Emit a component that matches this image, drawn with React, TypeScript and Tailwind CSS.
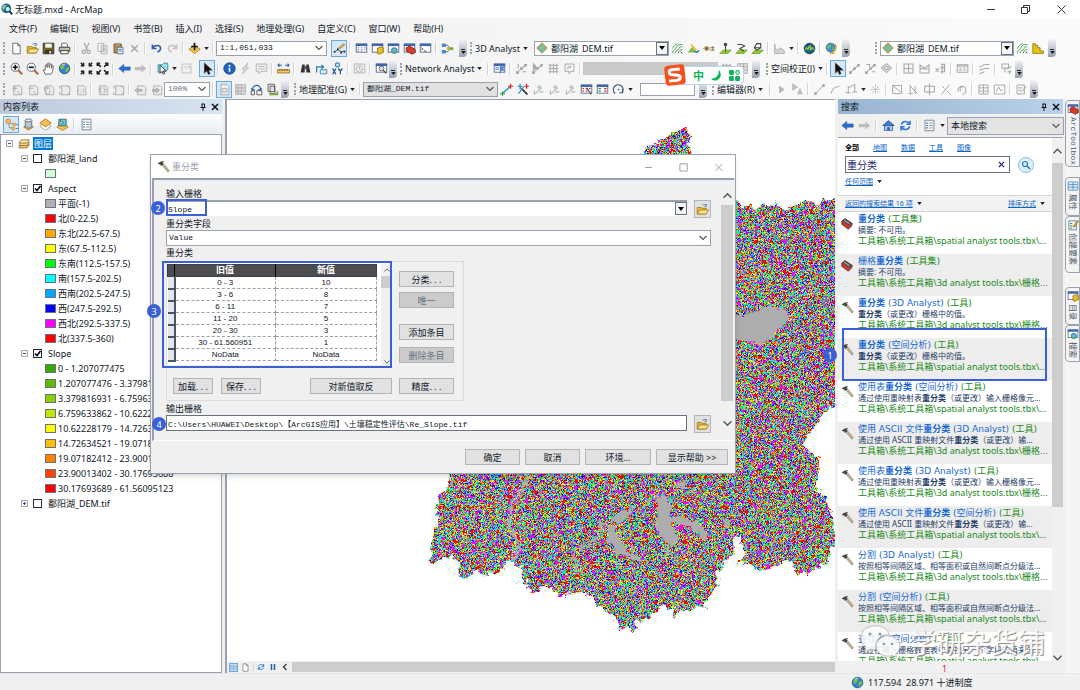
import { Fragment, type ReactNode } from 'react';

/* ---------- icons ---------- */

const G = '#a8a8a8';

const page = (c: string) => <path d="M3.5 1.5h6l3 3v10h-9zM9.5 1.5v3h3" fill="#fff" stroke={c} />;
const win = (extra: ReactNode) => (
  <>
    <rect x="1.5" y="2.5" width="13" height="10" fill="#fff" stroke="#4a5d80" />
    <rect x="1" y="2" width="14" height="3" fill="#3f68ab" />
    {extra}
  </>
);
const greyPage = (extra: ReactNode) => (
  <g fill="none" stroke={G}>
    <path d="M4.500 3.500h8l2 2v9h-10z" fill="#ececec" />
    {extra}
  </g>
);
const nodes = (extra: ReactNode) => (
  <g fill="none" stroke={G} strokeWidth="1.300">
    <path d="M3 13 8 8l5-4" />
    <path d="M2 12h2v2H2zM7 7h2v2H7zM12 3h2v2h-2z" fill={G} />
    {extra}
  </g>
);
const globe = (
  <>
    <circle cx="8" cy="8" r="6.500" fill="#2f7fd6" stroke="#28507c" />
    <path d="M4 4c3-2 5 0 4 2s-3 2-3 4c-2-1-3-4-1-6zM10 7c2-1 4 0 4 1s-2 4-4 5c-1-2-1-4 0-6z" fill="#7cc142" />
    <path d="M5 3.500c2-1 3-1 4-.5" stroke="#e4f5ff" fill="none" />
  </>
);
const surface = (extra: ReactNode) => (
  <>
    <path d="M1 14 5 10h10l-4 4z" fill="#8bcf2f" stroke="#4f7a1b" strokeWidth=".7" />
    <g fill="none" stroke="#444" strokeWidth="1.300">{extra}</g>
  </>
);

const icons: Record<string, ReactNode> = {
  new: page('#555'),
  open: (
    <>
      <path d="M1.500 5.500h5l1 1h5v7h-11z" fill="#e9b93c" stroke="#9b7614" />
      <path d="m1.500 13.500 3-5h11l-3 5z" fill="#ffe08a" stroke="#9b7614" />
      <path d="M8 3c2-2 4-1 5 0V1.500M13 4h-2.500" stroke="#2c67a8" fill="none" />
    </>
  ),
  save: (
    <>
      <path d="M1.500 1.500h13v13h-13z" fill="#6f6425" stroke="#222" />
      <path d="M4 2h8v5H4z" fill="#f3f3f3" />
      <path d="M4 10h8v4H4z" fill="#333" />
      <path d="M9 11h2v3H9z" fill="#eee" />
    </>
  ),
  print: (
    <>
      <path d="M4.500 1.500h6l1 1v4h-7z" fill="#fff" stroke="#555" />
      <path d="M1.500 6.500h13v5h-13z" fill="#bbb" stroke="#333" />
      <path d="M3.500 10.500h9v4h-9z" fill="#f4f4dc" stroke="#333" />
      <path d="M10 8h3" stroke="#e6e03a" />
    </>
  ),
  cut: (
    <g fill="none" stroke={G} strokeWidth="1.500">
      <path d="m5 1 4 9M11 1 7 10" />
      <circle cx="4.500" cy="12" r="2" />
      <circle cx="10.500" cy="12" r="2" />
    </g>
  ),
  copy: (
    <g fill="#f1f1f1" stroke={G}>
      <path d="M2.500 1.500h7v10h-7zM6.500 4.500h7v10h-7zM8 7.500h4M8 9.500h4M8 11.500h4" />
    </g>
  ),
  paste: (
    <>
      <path d="M2.500 2.500h9v11h-9z" fill="#c58a3d" stroke="#6b4a1d" />
      <path d="M5 1h4v3H5z" fill="#999" />
      <path d="M6.500 6.500h7v8h-7z" fill="#e8f1ff" stroke="#41699c" />
      <path d="M8 9h4M8 11h4" stroke="#41699c" />
    </>
  ),
  del: <path d="m4 4 8 8M12 4l-8 8" stroke={G} strokeWidth="2" />,
  undo: <path d="M3 3v5h5M3 8c2-5 10-5 10 0 0 2-2 4-4 4" fill="none" stroke="#2760a8" strokeWidth="2" />,
  redo: <path d="M13 3v5H8M13 8C11 3 3 3 3 8c0 2 2 4 4 4" fill="none" stroke="#c4c4c4" strokeWidth="2" />,
  add: (
    <>
      <path d="m8 4 7 5-7 5-7-5z" fill="#f5c64c" stroke="#a87a10" />
      <path d="M8 1v9M4 5.500h8" stroke="#111" strokeWidth="2" />
    </>
  ),
  edit: (
    <>
      <path d="m2 12 4-3 4 3 5-1" fill="none" stroke="#444" />
      <path d="M1 11h2v2H1zM5 8h2v2H5zM9 12h2v2H9zM13 11h2v2h-2z" fill="#111" />
      <path d="m7 7 6-5 1.500 1.500L9 8z" fill="#f3b53a" stroke="#7a5310" strokeWidth=".7" />
    </>
  ),
  table: win(<path d="M3 7h2M7 7h2M11 7h2M3 9h2M7 9h2M11 9h2M3 11h2M7 11h2" stroke="#5b8ad0" />),
  catalog: win(<path d="M8 7.500 13 6l2 1v6l-5 2-2-1z" fill="#e8bf25" stroke="#8b6b08" />),
  search: win(
    <>
      <circle cx="9" cy="10.500" r="3.500" fill="#5cb7d9" stroke="#2b6288" />
      <path d="m6 12 4 2" stroke="#68ad32" strokeWidth="1.500" />
    </>,
  ),
  toolbox: win(<path d="m4 7 4-2 7 4v4l-4 2-7-4z" fill="#d43d2a" stroke="#7d1a10" />),
  python: win(<path d="m3 7 2 1.500L3 10M6 11h3" fill="none" stroke="#333" />),
  model: (
    <>
      <path d="M4 4h4l3 4M4 12h4l3-4" fill="none" stroke="#555" />
      <path d="M1 2h5v4H1z" fill="#3f83d8" />
      <path d="M1 10h5v4H1z" fill="#3f83d8" />
      <path d="M7 6h3v4H7z" fill="#f1b42c" />
      <ellipse cx="13" cy="8" rx="2.500" ry="2" fill="#65b32e" />
    </>
  ),
  contour: (
    <g fill="none" stroke="#4d9d57" strokeWidth="1.200">
      <path d="M2 14c0-5 3-4 4-7s4-4 8-4M5 14c0-4 4-3 5-6s2-2 4-2M9 14c0-3 2-4 5-5M2 8c1-3 3-5 6-6" />
      <path d="m12 12 2 2" stroke="#333" />
    </g>
  ),
  steep: (
    <>
      <path d="M1 13 6 6l4 5 5 2z" fill="#77c043" />
      <path d="m5 3 6 7" stroke="#f1b42c" strokeWidth="2" />
      <path d="m9 11 3 2 3-3" stroke="#2b66b1" fill="none" strokeWidth="1.500" />
    </>
  ),
  sight: (
    <>
      <path d="M1 8c2-3 5-3 7 0-2 3-5 3-7 0z" fill="#f1dfb3" stroke="#8b6422" />
      <circle cx="4.500" cy="8" r="1.500" fill="#444" />
      <path d="M9 7h5M9 10h5" stroke="#e17e1f" strokeWidth="1.500" />
      <path d="M12 5v6" stroke="#3878c7" />
    </>
  ),
  point3d: surface(
    <>
      <path d="M8 4v8" />
      <circle cx="8" cy="3" r="1.500" fill="#444" />
    </>,
  ),
  line3d: surface(<path d="M3 3h5l4 2-6 3 5 3" />),
  poly3d: surface(<path d="M4 7 7 2h5v5zM4 7l3 3 5-3" />),
  profile: <path d="M2 2v12h12v-3L9 7 6 10 3 8z" fill="#d4d4d4" stroke={G} />,
  scene: (
    <>
      <circle cx="8" cy="8" r="6.500" fill="#155d82" stroke="#0c3a57" />
      <path d="M3 10c1-4 2-4 3 0M6 10c1-6 3-6 4 0M10 9c1-3 2-3 3 1" fill="none" stroke="#8fd14c" strokeWidth="1.500" />
      <path d="M9 4v6" stroke="#f4a52b" strokeWidth="1.500" />
    </>
  ),
  arcglobe: (
    <>
      <circle cx="7" cy="7" r="5.500" fill="#3791e0" stroke="#31629c" />
      <path d="M4 4c3-2 4 0 3 2S4 8 4 10C2 8 2 5 4 4zM9 6l3 1-2 4z" fill="#77c442" />
      <path d="M12 2c3 4 2 9-3 11M6 14h6" stroke="#e3a522" strokeWidth="1.700" fill="none" />
    </>
  ),
  histo: <path d="M1 14V2h3v2h3v3h3v4h4v3z" fill="#e6c11e" stroke="#8f7508" />,
  zoomIn: (
    <>
      <path d="m10 10 5 5" stroke="#b0622c" strokeWidth="2.500" />
      <circle cx="6.500" cy="6.500" r="5" fill="#eef6fb" stroke="#555" />
      <path d="M6.500 3.500v6M3.500 6.500h6" stroke="#111" strokeWidth="2" />
    </>
  ),
  zoomOut: (
    <>
      <path d="m10 10 5 5" stroke="#b0622c" strokeWidth="2.500" />
      <circle cx="6.500" cy="6.500" r="5" fill="#eef6fb" stroke="#555" />
      <path d="M3.500 6.500h6" stroke="#111" strokeWidth="2" />
    </>
  ),
  hand: <path d="M4 15 1.500 9.500 4 10V4l1.500-1 1 4V2L8 1l1 6 1-5 1.500.5V8l1-4L14 5l-1 7-2 3z" fill="#fff" stroke="#555" />,
  globe,
  zin: (
    <path
      d="M1 4.500h3.500V1M15 4.500h-3.500V1M1 11.500h3.500V15M15 11.500h-3.500V15M4.500 4.500 1 1M11.500 4.500 15 1M4.500 11.500 1 15M11.500 11.500 15 15"
      fill="none"
      stroke="#222"
      strokeWidth="1.800"
    />
  ),
  zout: (
    <path
      d="M1.500 5V1.500H5M14.500 5V1.500H11M1.500 11v3.500H5M14.500 11v3.500H11M2 2l4 4M14 2l-4 4M2 14l4-4M14 14l-4-4"
      fill="none"
      stroke="#222"
      strokeWidth="1.800"
    />
  ),
  back: <path d="m1 8 6-5v3h8v4H7v3z" fill="#2b6fd0" stroke="#1a4690" strokeWidth=".6" />,
  fwd: <path d="M15 8 9 3v3H1v4h8v3z" fill="#bdbdbd" />,
  selfeat: (
    <>
      <path d="M2.500 3.500h5l2-2h5v8l-4 3h-8z" fill="#8fe4ea" stroke="#41769a" />
      <path d="M5 4v10l2.500-2.500L9 15l1.500-.7L9 11h3.500z" fill="#fff" stroke="#222" />
    </>
  ),
  clear: <path d="M2.500 2.500h11v11h-11zM5 5l3 3M9 5.500h3v3" fill="#efefef" stroke="#bbb" />,
  pointer: <path d="M4 1v13l3-3 2 4.500 2.300-1L9.500 10H14z" fill="#111" stroke="#555" strokeWidth=".5" />,
  info: (
    <>
      <circle cx="8" cy="8" r="7" fill="#1f63bd" stroke="#123f80" />
      <circle cx="8" cy="4.500" r="1.200" fill="#fff" />
      <path d="M8 7v5" stroke="#fff" strokeWidth="2" />
    </>
  ),
  bolt: <path d="M11 1 4 9h3l-3 6 8-8H8.500z" fill="#ddd" stroke={G} strokeWidth=".8" />,
  popup: <path d="M1.500 2.500h13v9h-7l-3 3v-3h-3zM4 5.500h8M4 8.500h8" fill="#f1f1f1" stroke={G} />,
  measure: (
    <>
      <path d="M1 4h5M1 4l2-2M1 4l2 2M15 4h-5M15 4l-2-2M15 4l-2 2" stroke="#2760a8" strokeWidth="1.300" fill="none" />
      <path d="M.5 9.500h15v4H.5z" fill="#f5c96a" stroke="#8f6a1c" />
      <path d="M3.500 9v2M6.500 9v2M9.500 9v2M12.500 9v2" stroke="#5b420d" />
    </>
  ),
  find: (
    <>
      <path d="M2 13 4 3h3v10zM9 13V3h3l2 10z" fill="#333" />
      <path d="M6 5h4v4H6z" fill="#555" />
    </>
  ),
  route: (
    <>
      <path d="M2 13V6h8M8 3.500 10.500 6 8 8.500" fill="none" stroke="#2b75b9" strokeWidth="1.500" />
      <path d="M6.500 9.500h8v5h-8z" fill="#d7ecf9" stroke="#2b75b9" />
    </>
  ),
  xy: (
    <>
      <circle cx="8" cy="3.500" r="2.500" fill="none" stroke="#2b87c9" strokeWidth="1.500" />
      <path d="m2 8 4 7M6 8l-4 7M9 8l2.500 3L14 8M11.500 11v4" fill="none" stroke="#1c4f8f" strokeWidth="1.500" />
    </>
  ),
  time: (
    <g fill="#f1f1f1" stroke={G}>
      <path d="M1.500 2.500h13v11h-13z" />
      <circle cx="8" cy="8.500" r="4" />
      <path d="M8 6v3h2" />
    </g>
  ),
  viewer: win(
    <>
      <circle cx="8" cy="8" r="3" fill="#ddd" stroke="#555" />
      <path d="m10 10 4 4" stroke="#444" strokeWidth="1.500" />
    </>,
  ),
  nawin: win(<path d="M9 5v9M9 6h5l-2 2 2 2H9M3 7h4M3 9h4" stroke="#2b66c1" fill="#5f93e5" />),
  na1: nodes(<path d="M4 2v6M9 12h5" />),
  na2: nodes(<path d="M3 2v8l2-2h3z" fill={G} />),
  grid: <path d="M2 4h12M2 8h12M2 12h12M4 2v12M8 2v12M12 2v12" stroke={G} strokeWidth="1.200" />,
  dirs: <path d="M2.500 2.500h11v9h-4l-2 3v-3h-5zM6 9V6h4M8.500 4.500 10 6 8.500 7.500" fill="none" stroke={G} strokeWidth="1.200" />,
  node1: nodes(null),
  node2: nodes(<path d="M3 3h4v3M10 12h4" />),
  diamond: <path d="m8 2 6 5-6 6-6-6zM5 7l3-2 3 2-3 3z" fill="none" stroke={G} strokeWidth="1.300" />,
  square: <path d="M2.500 2.500h11v11h-11zM8 2v12M2 8h12" fill="none" stroke={G} strokeWidth="1.300" />,
  fold: <path d="M2.500 3.500 8 8l5.500-4.500v10h-11zM2 9l4-1 4 1 4-1" fill="none" stroke={G} strokeWidth="1.300" />,
  foldx: <path d="M9 3h4v9M2 8l4 4M6 8l-4 4M8 7h5M8 12h6M10 3v11" fill="none" stroke={G} strokeWidth="1.500" />,
  tbl: <path d="M1.500 3.500h13v9h-13zM2 5h12M4 7.500h3M9 7.500h3M4 10h3M9 10h3" fill="none" stroke={G} strokeWidth="1.300" />,
  edge: <path d="M2 6c3 0 4-3 7-3h5M2 10c3 0 4-2 7-2h5M2 14c3 0 4-2 6-2" fill="none" stroke={G} strokeWidth="1.300" />,
  attr: <path d="M2.500 2.500h8v5h-8zM6 8v5M9 9l5-4M9 12h5M12 10v5" fill="none" stroke={G} strokeWidth="1.300" />,
  pzin: greyPage(<path d="M3 6.500h6M6 4v6M9 10l4 4" />),
  pzout: greyPage(<path d="M3 6.500h6M9 10l4 4" />),
  phand: greyPage(<path d="M3 9V5M5 8V4M7 8V4M9 8V5M3 9l3 5h3l1-5" />),
  pfull: greyPage(<path d="M2 7V4h3M14 7V4h-3M2 11v3h3M14 11v3h-3" />),
  p11: greyPage(<path d="M5 7v5M12 7v5M8.500 8v1M8.500 11v1" />),
  pin: greyPage(<path d="M6 5v3H3M10 5v3h3M6 13v-3H3M10 13v-3h3" />),
  pback: greyPage(<path d="m1 9 4-3v2h5v2H5v2z" fill="#bbb" />),
  pfwd: greyPage(<path d="m12 9-4-3v2H3v2h5v2z" fill="#bbb" />),
  draft: <path d="M3.500 1.500h7l3 3v10h-10zM5 7h6v4H5z" fill="#eee" stroke="#98a0a8" />,
  focus: <path d="M2 2h12v12H2zM5 2v12M9 2v12M2 6h12M2 10h12" fill="#ddd" stroke={G} />,
  change: (
    <>
      <path d="M3 8a5 5 0 0 1 10 0M2 6l1 3 3-1M14 6l-1 3-3-1" fill="none" stroke="#1f5ea8" strokeWidth="1.600" />
      <path d="M1.500 9.500h4v5h-4zM8.500 9.500h6v5h-6z" fill="#fff" stroke="#444" />
    </>
  ),
  ddp: (
    <>
      <path d="M2.500 1.500h8v9h-8zM5 4h6v9H5z" fill="#e4e4e4" stroke="#555" />
      <path d="M4 14h10v-4" stroke="#7dab3b" strokeWidth="2" fill="none" />
    </>
  ),
  ctrl: (
    <>
      <path d="M3 13 12 5" stroke="#1e87d7" strokeWidth="1.500" />
      <path d="M3 10v6M0 13h6" stroke="#3fae37" strokeWidth="1.500" />
      <path d="M13 1v6M10 4h6" stroke="#e0251b" strokeWidth="1.500" />
    </>
  ),
  auto: (
    <>
      <path d="m5 5 9 9M2 4h6M5 1v7M3 13l7-9" stroke="#2b83c4" strokeWidth="1.300" />
      <path d="M13 1v6M10 4h6" stroke="#e0251b" strokeWidth="1.500" />
      <path d="m8 8 6 6" stroke="#333" strokeWidth="2" />
    </>
  ),
  linkgrey: <path d="M3 14 12 6M9 2v6M6 5h6M9 11h5M3 9v5" stroke="#bbb" strokeWidth="1.500" />,
  links: win(
    <>
      <path d="M3 7h2M7 7h2M11 7h2M3 10h2M7 10h2" stroke="#c23b2c" strokeWidth="1.500" />
      <path d="m8 6 6 8" stroke="#555" strokeWidth="1.500" />
    </>,
  ),
  viewlinks: win(
    <>
      <path d="M3 7h3M3 10h3" stroke="#3b9a3d" strokeWidth="1.500" />
      <path d="M10 7h3M10 10h3" stroke="#c23b2c" strokeWidth="1.500" />
    </>,
  ),
  rotate: (
    <>
      <path d="M4 13A6 6 0 1 1 13 11M13 7v5H9" fill="none" stroke="#37557f" strokeWidth="1.500" />
      <circle cx="8" cy="8" r="1" fill="#37557f" />
    </>
  ),
  play: <path d="m5 3 7 5-7 5z" fill="#b7b7b7" />,
  playA: <path d="m2 1 6 4-6 4zM8 14l3-7 3 7M9 12h4" fill="#c3c3c3" stroke="#b7b7b7" />,
  seg: <path d="M3 13 13 3M2 12h2v2H2zM12 2h2v2h-2z" fill={G} stroke={G} strokeWidth="1.200" />,
  arc: <path d="M3 13c0-5 4-8 10-9" fill="none" stroke={G} strokeWidth="1.500" strokeDasharray="3 1" />,
  trace: <path d="M4 4v9M1 12h6M4 6l8-4v9M9 11h6" fill="none" stroke={G} strokeWidth="1.300" />,
  star: <path d="M8 2v12M2 8h12M4 4l8 8M12 4l-8 8" stroke="#b9b9b9" strokeWidth="1.200" strokeDasharray="3 1" />,
  reshape: <path d="M2 3h11v10H2zM2 3l11 9" fill="none" stroke={G} strokeWidth="1.200" />,
  cutp: <path d="M4 2v12M4 4l9 9M10 4v10M2 13h5" fill="none" stroke={G} strokeWidth="1.200" />,
  split: <path d="M2 4h12v7H2zM8 1v14" fill="none" stroke={G} strokeWidth="1.300" />,
  cross: <path d="m3 14 10-12M4 4l3 3M10 10l4 4" stroke={G} strokeWidth="1.200" />,
  turn: <path d="M4 11a5 5 0 1 1 5 3M9 5a3 3 0 0 0-2 5" fill="none" stroke={G} strokeWidth="1.300" />,
  props: <path d="M2.500 2.500h11v11h-11zM2 6h12M2 10h12M8 2v11" fill="none" stroke={G} strokeWidth="1.200" />,
  sketch: <path d="M1.500 2.500h13v11h-13zM4 11l3-6 3 5 2-2" fill="none" stroke={G} strokeWidth="1.200" />,
  tmpl: <path d="M2.500 2.500h9v11h-9zM4 6h5M4 9h4M8 11l6-7" fill="none" stroke={G} strokeWidth="1.200" />,
  layerDem: (
    <>
      <path d="m8 1 7 7-7 7-7-7z" fill="#d9c96d" stroke="#736833" />
      <path d="m8 3.500 4.500 4.500L8 12.500 3.500 8z" fill="#6ec7b4" stroke="#387e72" strokeWidth=".7" />
    </>
  ),
  hammer: (
    <>
      <path d="m5 5 2-1.500L15 13l-1.500 2z" fill="#c9b798" stroke="#77705f" strokeWidth=".7" />
      <path d="M1 5c2-3 5-4 8-3L6.500 3.500 8 5 5 7.500 4 5.500z" fill="#45413c" />
    </>
  ),
  toolset: (
    <>
      <path d="m1 5 4-3 9 6-1 3-4 4-8-6z" fill="#cf3a2e" stroke="#542019" />
      <path d="m1 5 4-3 9 6-4 3z" fill="#575150" />
      <path d="m4 4 6 4" stroke="#ddd" />
    </>
  ),
  home: (
    <>
      <path d="M3 8v6h10V8" fill="#a9c8f0" stroke="#2c5fa5" />
      <path d="m1 8 7-6 7 6z" fill="#3f7ed2" stroke="#24508f" />
      <path d="M6.500 10h3v4h-3z" fill="#2c5fa5" />
    </>
  ),
  refresh: (
    <g fill="none" stroke="#2f78d0" strokeWidth="2">
      <path d="M3 7c1-5 8-5 10-1M13 9c-1 5-8 5-10 1" />
      <path d="M13.500 2v4.500H9M2.500 14V9.500H7" />
    </g>
  ),
  list: (
    <>
      <path d="M2.500 1.500h11v13h-11z" fill="#f7fafc" stroke="#5f7385" />
      <path d="M4 5h2M4 8h2M4 11h2" stroke="#2e6fc0" strokeWidth="1.500" />
      <path d="M7.500 5H12M7.500 8H12M7.500 11H12" stroke="#777" />
    </>
  ),
  tocOrder: (
    <>
      <path d="M5 5v7h4M5 7h6" fill="none" stroke="#888" />
      <circle cx="4" cy="4" r="3" fill="#f3bd57" stroke="#b57a1c" strokeWidth=".7" />
      <circle cx="11.500" cy="8" r="2" fill="#f3bd57" stroke="#b57a1c" strokeWidth=".7" />
      <circle cx="10" cy="13" r="2" fill="#f3bd57" stroke="#b57a1c" strokeWidth=".7" />
      <path d="M14 8h2M13 13h3" stroke="#2f6fb0" />
    </>
  ),
  tocSource: (
    <>
      <path d="m8 7 6 4-6 4-6-4z" fill="#f3c04f" stroke="#ad7e1b" />
      <path d="M4 3v8c2 2 6 2 8 0V3z" fill="#b7c4d6" stroke="#53637a" />
      <ellipse cx="8" cy="3" rx="4" ry="1.800" fill="#e9eff7" stroke="#53637a" />
    </>
  ),
  tocVisible: (
    <>
      <path d="m8 5 7 5-7 5-7-5z" fill="#fff" stroke="#999" />
      <path d="m8 1 7 5-7 5-7-5z" fill="#f5bf4d" stroke="#b0791b" />
    </>
  ),
  tocSelect: (
    <>
      <path d="m8 6 7 5-7 4.500L1 11z" fill="#f5bf4d" stroke="#b0791b" />
      <path d="M3.500 1.500h9v8h-9z" fill="#5fd2dc" stroke="#2c5675" />
      <path d="m5 3 2 5 1-2h2z" fill="#fff" stroke="#222" strokeWidth=".6" />
    </>
  ),
  layers: (
    <>
      <path d="M4 9.500h10l-3 4H1z" fill="#f0c777" stroke="#8f6a2a" />
      <path d="M4 6.500h10l-3 4H1z" fill="#f6d694" stroke="#8f6a2a" />
      <path d="M4 3.500h10l-3 4H1z" fill="#fbe4b2" stroke="#8f6a2a" />
    </>
  ),
  dockTable: <path d="M1.500 2.500h13v11h-13zM2 6h12M2 9.500h12M8 3v10" fill="#d9ecfb" stroke="#4d87b8" />,
  dockEdit: (
    <>
      <path d="M2.500 2.500h10v12h-10z" fill="#eef5fb" stroke="#4d6f90" />
      <path d="M4 6h3M4 9h3M4 12h3" stroke="#3b9a3d" strokeWidth="1.500" />
      <path d="m8 10 6-8 1.500 1L10 11z" fill="#f1a33a" stroke="#6d4712" strokeWidth=".6" />
    </>
  ),
  appLogo: (
    <>
      <circle cx="7" cy="7" r="6.500" fill="#1c6f93" />
      <path d="M3 3c3-2 5 0 4 2S4 7 4 10C1 8 1 5 3 3z" fill="#8dc7a0" />
      <circle cx="9" cy="8" r="3.500" fill="#c8ecf4" stroke="#123a50" />
      <path d="m11 11 4 4" stroke="#123a50" strokeWidth="2.500" />
    </>
  ),
};

function Icon({ n, className = 'size-[13px]' }: { n: string; className?: string }) {
  return (
    <svg viewBox="0 0 16 16" className={`${className} shrink-0`} aria-hidden="true">
      {icons[n]}
    </svg>
  );
}

function Chevron({ className = 'h-[5px] w-2', color = '#555' }: { className?: string; color?: string }) {
  return (
    <svg viewBox="0 0 8 5" className={className} aria-hidden="true">
      <path d="m.5.5 3.500 3.500L7.500.5" fill="none" stroke={color} strokeWidth="1.200" />
    </svg>
  );
}

function Caret({ className = 'h-[3px] w-[5px]', color = '#222' }: { className?: string; color?: string }) {
  return (
    <svg viewBox="0 0 6 4" className={className} aria-hidden="true">
      <path d="M0 0h6L3 4z" fill={color} />
    </svg>
  );
}

/* ---------- toolbar parts ---------- */

const Sep = () => <span className="mx-[2px] h-3 w-[2px] shrink-0 border-l border-r border-l-gray-300 border-r-white" />;
const Grip = () => <span className="ml-[3px] mr-[3px] h-3 w-[2px] shrink-0 border-l-2 border-dotted border-gray-400" />;

function Tools({ names }: { names: string }) {
  return (
    <>
      {names.split(' ').map((n, i) => {
        if (n === '|') return <Sep key={i} />;
        if (n === 'v')
          return (
            <span key={i} className="flex w-2 shrink-0 justify-center">
              <Caret />
            </span>
          );
        const active = n.startsWith('*');
        const name = active ? n.slice(1) : n;
        return (
          <button
            key={i}
            type="button"
            aria-label={name}
            className={
              active
                ? 'flex h-[17px] w-4 shrink-0 items-center justify-center border border-[#6aa9dc] bg-[#d6e8f7]'
                : 'flex h-[17px] w-4 shrink-0 items-center justify-center'
            }
          >
            <Icon n={name} />
          </button>
        );
      })}
    </>
  );
}

function Overflow() {
  return (
    <button
      type="button"
      aria-label="overflow"
      className="ml-auto flex h-[18px] w-2 shrink-0 flex-col items-center justify-end gap-px rounded-r-sm bg-linear-to-b from-gray-100 to-gray-400 pb-[3px]"
    >
      <span className="h-px w-1 bg-gray-800" />
      <Caret color="#111" />
    </button>
  );
}

function MenuLabel({ text, className }: { text: string; className: string }) {
  return (
    <button type="button" className={`flex shrink-0 items-center gap-[3px] whitespace-nowrap ${className}`}>
      {text}
      <Caret />
    </button>
  );
}

interface ComboProps {
  label: string;
  value: string;
  className: string;
  icon?: boolean;
  classic?: boolean;
  selectClass?: string;
}

function Combo({ label, value, className, icon, classic, selectClass = '' }: ComboProps) {
  return (
    <div className={`relative flex shrink-0 items-center border border-gray-400 ${className}`}>
      {icon && <Icon n="layerDem" className="ml-px size-[12px]" />}
      <select aria-label={label} className={`h-full min-w-0 flex-1 appearance-none bg-transparent pl-[3px] outline-none ${selectClass}`}>
        <option>{value}</option>
      </select>
      {classic ? (
        <span className="pointer-events-none absolute inset-y-0 right-0 flex w-3 items-center justify-center border border-gray-500 bg-gray-100">
          <Caret color="#000" className="h-1 w-[6px]" />
        </span>
      ) : (
        <span className="pointer-events-none absolute right-[3px] top-1/2 -translate-y-1/2">
          <Chevron />
        </span>
      )}
    </div>
  );
}

const menus = ['文件(F)', '编辑(E)', '视图(V)', '书签(B)', '插入(I)', '选择(S)', '地理处理(G)', '自定义(C)', '窗口(W)', '帮助(H)'];

function Toolbars() {
  return (
    <div className="bg-linear-to-r from-[#f0f0f0] to-[#fbfbfb]">
      <nav className="flex h-5 items-center gap-[13px] pl-[9px]">
        {menus.map((m) => (
          <button key={m} type="button" className="whitespace-nowrap">
            {m}
          </button>
        ))}
      </nav>

      {/* Standard, 3D Analyst, Spatial Analyst */}
      <div className="flex h-5 items-center">
        <div className="flex w-[467px] shrink-0 items-center">
          <Grip />
          <Tools names="new open save print | cut copy paste del | undo redo | add v |" />
          <Combo label="scale" value="1:1,051,033" className="mr-1 h-[15px] w-[111px] bg-white" selectClass="[font-family:'Liberation_Mono',monospace] text-[8px]" />
          <Tools names="*edit | table catalog search toolbox python | model" />
          <Overflow />
        </div>
        <div className="flex w-[383px] shrink-0 items-center">
          <Grip />
          <MenuLabel text="3D Analyst" className="w-[59px]" />
          <Combo icon classic label="3D layer" value="鄱阳湖_DEM.tif" className="h-[15px] w-[135px] bg-white" />
          <Tools names="contour steep sight point3d line3d poly3d | profile v | scene | arcglobe" />
          <Overflow />
        </div>
        <div className="ml-[22px] flex w-[184px] shrink-0 items-center">
          <Grip />
          <Combo icon classic label="raster layer" value="鄱阳湖_DEM.tif" className="h-[15px] w-[134px] bg-white" />
          <Tools names="contour histo" />
          <Overflow />
        </div>
      </div>

      {/* Tools, Network Analyst, Spatial Adjustment */}
      <div className="flex h-[21px] items-center">
        <div className="flex w-[397px] shrink-0 items-center">
          <Grip />
          <Tools names="zoomIn zoomOut hand globe | zin zout | back fwd | selfeat v clear" />
          <span className="w-[5px]" />
          <Tools names="*pointer | info bolt popup | measure | find route xy | time | viewer" />
          <Overflow />
        </div>
        <div className="flex w-[363px] shrink-0 items-center">
          <Grip />
          <MenuLabel text="Network Analyst" className="w-20" />
          <Tools names="| nawin | na1 na2 grid dirs |" />
          <span className="h-[13px] w-[135px] bg-[#c9c9c9]" />
          <Tools names="grid focus" />
          <Overflow />
        </div>
        <div className="ml-[3px] flex w-[260px] shrink-0 items-center">
          <Grip />
          <MenuLabel text="空间校正(J)" className="w-[53px]" />
          <Tools names="| *pointer node1 node2 diamond | square fold foldx | tbl | edge | attr" />
          <Overflow />
        </div>
      </div>

      {/* Layout, Georeferencing, Editor */}
      <div className="flex h-5 items-center">
        <div className="flex w-[289px] shrink-0 items-center">
          <Grip />
          <Tools names="pzin pzout phand pfull p11 | pin pfull | pback pfwd" />
          <Combo label="zoom" value="100%" className="h-[15px] w-[46px] bg-white text-gray-500" selectClass="[font-family:'Liberation_Mono',monospace] text-[8px]" />
          <Tools names="| *draft focus change ddp" />
          <Overflow />
        </div>
        <div className="ml-[2px] flex w-[416px] shrink-0 items-center">
          <Grip />
          <MenuLabel text="地理配准(G)" className="w-[58px]" />
          <Sep />
          <Combo label="georef layer" value="鄱阳湖_DEM.tif" className="h-[15px] w-[135px] bg-[#e1e1e1]" selectClass="[font-family:'Liberation_Mono','Noto_Sans_CJK_SC',monospace] text-[8px]" />
          <Tools names="ctrl auto linkgrey linkgrey linkgrey links viewlinks rotate v" />
          <input aria-label="angle" className="ml-[6px] h-[13px] w-[55px] border border-gray-400 bg-white" />
          <Overflow />
        </div>
        <div className="ml-[2px] flex w-[329px] shrink-0 items-center">
          <Grip />
          <MenuLabel text="编辑器(R)" className="w-[50px]" />
          <Tools names="| play playA | seg arc trace v star | reshape cutp split cross turn | props sketch | tmpl" />
          <Overflow />
        </div>
      </div>
    </div>
  );
}

/* ---------- table of contents ---------- */

const aspectClasses = [
  { color: '#b0b0b0', label: '平面(-1)' },
  { color: '#ff0000', label: '北(0-22.5)' },
  { color: '#ffa600', label: '东北(22.5-67.5)' },
  { color: '#ffff00', label: '东(67.5-112.5)' },
  { color: '#00ff00', label: '东南(112.5-157.5)' },
  { color: '#00ffff', label: '南(157.5-202.5)' },
  { color: '#00a6ff', label: '西南(202.5-247.5)' },
  { color: '#0000ff', label: '西(247.5-292.5)' },
  { color: '#ff00ff', label: '西北(292.5-337.5)' },
  { color: '#ff0000', label: '北(337.5-360)' },
];

const slopeClasses = [
  { color: '#38a800', label: '0 - 1.207077475' },
  { color: '#5fbb00', label: '1.207077476 - 3.379816930' },
  { color: '#8bd100', label: '3.379816931 - 6.759633861' },
  { color: '#c1e800', label: '6.759633862 - 10.62228178' },
  { color: '#ffff00', label: '10.62228179 - 14.72634520' },
  { color: '#ffbf00', label: '14.72634521 - 19.07182411' },
  { color: '#ff8000', label: '19.07182412 - 23.90013401' },
  { color: '#ff4000', label: '23.90013402 - 30.17693688' },
  { color: '#ff0000', label: '30.17693689 - 61.56095123' },
];

const layers = [
  { name: '鄱阳湖_land', checked: false, open: true, classes: [{ color: '#d1ffd6', label: '' }] },
  { name: 'Aspect', checked: true, open: true, classes: aspectClasses },
  { name: 'Slope', checked: true, open: true, classes: slopeClasses },
  { name: '鄱阳湖_DEM.tif', checked: false, open: false, classes: [] },
];

function Expander({ open }: { open: boolean }) {
  return (
    <svg viewBox="0 0 7 7" className="size-[7px] shrink-0" aria-hidden="true">
      <path d="M.5.5h6v6h-6z" fill="#f7f7f7" stroke="#a5a5a5" />
      <path d={open ? 'M2 3.500h3' : 'M2 3.500h3M3.500 2v3'} stroke="#3c5a9a" />
    </svg>
  );
}

function PanelTitle({ text, className }: { text: string; className: string }) {
  return (
    <div className={`flex h-[15px] shrink-0 items-center pl-[3px] pr-[3px] ${className}`}>
      <h2 className="flex-1">{text}</h2>
      <svg viewBox="0 0 8 8" className="mr-1 size-2" aria-hidden="true">
        <path d="M2.500 1h3M3 1v3M5.500 1v3M1.500 4.500h5M4 5v3" stroke="#111" fill="none" />
      </svg>
      <svg viewBox="0 0 8 8" className="size-2" aria-hidden="true">
        <path d="m1 1 6 6M7 1 1 7" stroke="#111" strokeWidth="1.500" />
      </svg>
    </div>
  );
}

function ContentsPanel() {
  return (
    <aside className="flex w-[222px] shrink-0 flex-col">
      <PanelTitle text="内容列表" className="bg-linear-to-r from-[#bccadb] to-[#d6e4f2]" />
      <div className="flex h-5 shrink-0 items-center gap-px bg-linear-to-b from-[#fdfdfd] to-[#e9edf1] pl-[3px]">
        <Tools names="*tocOrder tocSource tocVisible tocSelect | list" />
      </div>
      <div className="min-h-0 flex-1 overflow-hidden border border-gray-400 bg-white pt-px">
        <div className="flex h-[15px] items-center pl-[5px]">
          <Expander open />
          <Icon n="layers" className="ml-[5px] size-[13px]" />
          <span className="ml-[2px] bg-[#0078d7] px-px leading-[13px] text-white">图层</span>
        </div>
        {layers.map((layer) => (
          <Fragment key={layer.name}>
            <div className="flex h-[15px] items-center pl-5">
              <Expander open={layer.open} />
              <label className="flex items-center gap-[6px] pl-[5px]">
                <input
                  type="checkbox"
                  defaultChecked={layer.checked}
                  className="peer size-[9px] appearance-none border border-gray-800 bg-white"
                />
                <svg viewBox="0 0 9 9" className="pointer-events-none -ml-[15px] hidden size-[9px] peer-checked:block" aria-hidden="true">
                  <path d="m2 4.500 2 2 3.500-4.500" fill="none" stroke="#000" strokeWidth="1.500" />
                </svg>
                {layer.name}
              </label>
            </div>
            {layer.classes.map((c) => (
              <div key={c.label} className="flex h-[15px] items-center gap-[2px] whitespace-nowrap pl-[44px]">
                <span className="h-[9px] w-[11px] shrink-0 border border-gray-500" style={{ backgroundColor: c.color }} />
                {c.label}
              </div>
            ))}
          </Fragment>
        ))}
      </div>
    </aside>
  );
}

/* ---------- map ---------- */

function MapView() {
  return (
    <main className="ml-[3px] flex min-w-0 flex-1 flex-col border-l-2 border-t border-gray-400 bg-[#f0f0f0]">
      <div className="min-h-0 flex-1 overflow-hidden bg-white">
        <svg viewBox="227 100 608 561" preserveAspectRatio="xMinYMin slice" className="h-full w-full" aria-hidden="true">
          <defs>
            <filter id="aspect" x="400" y="110" width="450" height="540" filterUnits="userSpaceOnUse" colorInterpolationFilters="sRGB">
              <feTurbulence type="fractalNoise" baseFrequency="0.24 0.2" numOctaves="3" seed="7" result="noise" />
              <feColorMatrix in="noise" values="2.600 0 0 0 -.8  2.600 0 0 0 -.8  2.600 0 0 0 -.8  0 0 0 0 1" />
              <feComponentTransfer>
                <feFuncR type="discrete" tableValues="1 1 1 0 0 0 .1 1 .68 1 1 1 0 0 0 .1 1 .68 1 1 1 0 0 0 .1 1" />
                <feFuncG type="discrete" tableValues="0 .6 1 1 1 .65 0 0 .68 0 .6 1 1 1 .65 0 0 .68 0 .6 1 1 1 .65 0 0" />
                <feFuncB type="discrete" tableValues="0 0 0 .1 1 1 1 1 .68 0 0 0 .1 1 1 1 1 .68 0 0 0 .1 1 1 1 1" />
              </feComponentTransfer>
              <feGaussianBlur stdDeviation="0.45" result="hue" />
              <feTurbulence type="fractalNoise" baseFrequency="0.15" numOctaves="3" seed="3" result="rough" />
              <feDisplacementMap in="SourceGraphic" in2="rough" scale="12" xChannelSelector="R" yChannelSelector="G" result="shape" />
              <feComposite in="hue" in2="shape" operator="in" />
            </filter>
            <filter id="coast" x="400" y="110" width="450" height="540" filterUnits="userSpaceOnUse">
              <feTurbulence type="fractalNoise" baseFrequency="0.2" numOctaves="3" seed="9" />
              <feDisplacementMap in="SourceGraphic" scale="9" xChannelSelector="R" yChannelSelector="G" />
            </filter>
          </defs>
          <g filter="url(#aspect)">
            <path d="M636 160 650 146 662 138 674 131 688 127 692 136 688 146 692 160z" />
            <path d="M459 465 448 487 440 495 436 503 438 520 434 535 431 545 432 555 427 563 435 562 448 556 457 562 463 570 455 577 463 580 475 572 487 575 500 572 506 562 515 562 522 570 526 580 527 590 532 594 540 587 553 588 556 597 565 594 578 592 593 594 597 604 606 611 614 618 619 627 630 628 634 634 638 622 648 616 658 612 661 605 673 610 676 619 680 610 693 607 706 606 710 595 720 585 717 573 722 564 732 558 735 548 733 538 738 534 742 540 744 552 739 563 745 563 762 569 775 566 789 560 797 572 803 576 812 568 826 566 829 555 835 545 833 525 830 502 822 495 814 488 818 470 820 460 808 452 803 443 806 436 816 428 824 412 845 402 845 196 830 199 815 204 800 202 785 208 770 204 755 209 736 202 700 210 700 465z" />
          </g>
          <g filter="url(#coast)" fill="#adadad">
            <path d="M732 312 744 316 758 310 772 306 786 310 790 318 780 326 772 338 758 346 750 340 740 342 732 336z" />
            <path d="M655 496 664 494 672 506 670 516 684 518 700 524 707 534 706 542 698 532 680 524 672 524 678 538 674 546 662 540 655 528 658 514z" />
            <path d="M610 524 618 532 624 548 636 556 644 564 630 558 618 554 608 540 604 548z" />
            <path d="M612 520 622 512 634 506 630 514 618 524z" />
            <path d="M676 484 688 480 682 490zM722 518 732 524 726 530z" />
          </g>
          <g filter="url(#coast)" fill="none" stroke="#adadad" strokeWidth="3">
            <path d="M528 476c-6 16-22 30-18 50 2 10 12 14 8 24l-4 10" />
            <path d="M600 518c2 16-4 26-20 30s0 14-4 22M668 540v12l12 12" strokeWidth="2" />
          </g>
        </svg>
      </div>
      <div className="flex h-3 shrink-0 items-center gap-[3px] pl-[2px]">
        <button type="button" aria-label="data view" className="border border-[#6aa9dc] bg-[#d6e8f7]">
          <Icon n="dockTable" className="size-[7px]" />
        </button>
        <Icon n="new" className="size-[9px]" />
        <span className="h-2 w-px bg-gray-300" />
        <Icon n="refresh" className="size-[8px]" />
        <svg viewBox="0 0 8 8" className="ml-px size-[8px]" aria-hidden="true">
          <path d="M2.500 1v6M5.500 1v6" stroke="#1f5ea8" strokeWidth="1.500" />
        </svg>
        <svg viewBox="0 0 8 8" className="ml-px size-[8px]" aria-hidden="true">
          <path d="M5.500 1 2.500 4l3 3" stroke="#333" strokeWidth="1.200" fill="none" />
        </svg>
        <span className="h-[10px] flex-1 bg-[#cdcdcd]" />
      </div>
    </main>
  );
}

/* ---------- search window ---------- */

const SA = '工具箱\\系统工具箱\\spatial analyst tools.tbx\\...';
const DA = '工具箱\\系统工具箱\\3d analyst tools.tbx\\栅格...';

const results = [
  { pre: '', tail: '', kind: '工具集', hit: '重分类', body: ['摘要: 不可用。'], path: SA },
  { pre: '栅格', tail: '', kind: '工具集', hit: '重分类', body: ['摘要: 不可用。'], path: DA },
  { pre: '', tail: ' (3D Analyst)', kind: '工具', hit: '重分类', body: ['', '重分类', '（或更改）栅格中的值。'], path: DA },
  { pre: '', tail: ' (空间分析)', kind: '工具', hit: '重分类', body: ['', '重分类', '（或更改）栅格中的值。'], path: SA },
  { pre: '使用表', tail: ' (空间分析)', kind: '工具', hit: '重分类', body: ['通过使用重映射表', '重分类', '（或更改）输入栅格像元...'], path: SA },
  { pre: '使用 ASCII 文件', tail: ' (3D Analyst)', kind: '工具', hit: '重分类', body: ['通过使用 ASCII 重映射文件', '重分类', '（或更改）输...'], path: DA },
  { pre: '使用表', tail: ' (3D Analyst)', kind: '工具', hit: '重分类', body: ['通过使用重映射表', '重分类', '（或更改）输入栅格像元...'], path: DA },
  { pre: '使用 ASCII 文件', tail: ' (空间分析)', kind: '工具', hit: '重分类', body: ['通过使用 ASCII 重映射文件', '重分类', '（或更改）输...'], path: SA },
  { pre: '分割', tail: ' (3D Analyst)', kind: '工具', hit: '', body: ['按照相等间隔区域、相等面积或自然间断点分级法...'], path: DA },
  { pre: '分割', tail: ' (空间分析)', kind: '工具', hit: '', body: ['按照相等间隔区域、相等面积或自然间断点分级法...'], path: SA },
  { pre: '查找表', tail: ' (空间分析)', kind: '工具', hit: '', body: ['通过在输入栅格数据表中查找另一个字段的值来创...'], path: SA },
];

function SearchPanel() {
  return (
    <aside className="ml-[3px] flex w-[225px] shrink-0 flex-col bg-[#f0f0f0]">
      <PanelTitle text="搜索" className="bg-linear-to-r from-[#99b4d1] to-[#b9d1ea]" />
      <div className="flex h-[23px] shrink-0 items-center gap-px pl-px">
        <Tools names="back fwd | home refresh | list v" />
        <Combo label="search scope" value="本地搜索" className="ml-auto h-[18px] w-[117px] bg-[#e4e4e4] text-[9px]" />
      </div>
      <div className="flex min-h-0 flex-1 border-t border-gray-400">
        <div className="flex min-w-0 flex-1 flex-col">
          <div className="h-[57px] shrink-0 bg-white pl-[7px]">
            <div className="flex h-[18px] items-center gap-[14px] text-[7px] text-[#0b66c8]">
              <span className="font-bold text-black">全部</span>
              {['地图', '数据', '工具', '图像'].map((t) => (
                <a key={t} href="#" className="underline">
                  {t}
                </a>
              ))}
            </div>
            <div className="flex items-center gap-2">
              <div className="flex h-[17px] w-[165px] items-center border border-gray-500 bg-white pr-1">
                <input aria-label="search text" defaultValue="重分类" className="h-full min-w-0 flex-1 pl-px text-[10px] text-[#24246e] outline-none" />
                <svg viewBox="0 0 8 8" className="size-[7px]" aria-hidden="true">
                  <path d="m1 1 6 6M7 1 1 7" stroke="#25257a" strokeWidth="1.500" />
                </svg>
              </div>
              <button type="button" aria-label="search" className="flex size-4 items-center justify-center rounded-full border border-[#8fc0dc] bg-[#d9effa]">
                <svg viewBox="0 0 10 10" className="size-[10px]" aria-hidden="true">
                  <circle cx="4" cy="4" r="2.500" fill="none" stroke="#2377b5" strokeWidth="1.200" />
                  <path d="m6 6 3 3" stroke="#2377b5" strokeWidth="1.500" />
                </svg>
              </button>
            </div>
            <div className="flex h-4 items-center gap-1 text-[7px] text-[#0b66c8]">
              <a href="#" className="underline">任何范围</a>
              <Caret />
            </div>
          </div>
          <div className="flex h-[17px] shrink-0 items-center gap-1 border-t border-b border-gray-300 bg-[#f2f2f2] px-[7px] text-[7px] text-[#0b66c8]">
            <a href="#" className="underline">返回的搜索结果 16 项</a>
            <Caret />
            <a href="#" className="ml-auto underline">排序方式</a>
            <Caret />
          </div>
          <ul className="min-h-0 flex-1 overflow-hidden">
            {results.map((r, i) => (
              <li
                key={i}
                className={
                  i % 2
                    ? 'flex h-[42px] gap-1 whitespace-nowrap bg-[#ededed] pl-[3px] pt-px'
                    : 'flex h-[42px] gap-1 whitespace-nowrap bg-white pl-[3px] pt-px'
                }
              >
                <Icon n={i < 2 ? 'toolset' : 'hammer'} className="mt-1 size-[13px]" />
                <div>
                  <h3 className="[font-family:'DejaVu_Sans','Noto_Sans_CJK_SC',sans-serif] leading-3 text-[#1769d2]">
                    {r.pre}
                    <b>{r.hit}</b>
                    {r.tail} <span className="text-[#1b8a1b]">({r.kind})</span>
                  </h3>
                  <p className="text-[8px] leading-[10px] text-[#1d3c66]">
                    {r.body[0]}
                    <b>{r.body[1]}</b>
                    {r.body[2]}
                  </p>
                  <p className="leading-3 text-[#1b8a1b]">{r.path}</p>
                </div>
              </li>
            ))}
          </ul>
        </div>
        <div className="flex w-[11px] shrink-0 flex-col items-center bg-[#f0f0f0]">
          <span className="flex h-[25px] items-center">
            <Chevron className="h-[6px] w-[9px] rotate-180" />
          </span>
          <span className="h-[344px] w-full bg-[#cdcdcd]" />
          <Chevron className="mt-auto h-[6px] w-[9px]" />
        </div>
      </div>
      <div className="flex h-3 shrink-0 items-center justify-center pr-3 pt-[3px] text-[8px] text-red-600">1</div>
    </aside>
  );
}

const dockTabs = [
  { text: 'ArcToolbox', icon: 'toolbox', className: 'mt-px h-[67px] [font-family:"Liberation_Mono",monospace]' },
  { text: '属性', icon: 'dockTable', className: 'mt-[10px] h-[39px]' },
  { text: '创建要素', icon: 'dockEdit', className: 'h-[57px]' },
  { text: '目录', icon: 'catalog', className: 'mt-[14px] h-[38px]' },
  { text: '搜索', icon: 'search', className: 'h-[37px]' },
];

function DockTabs() {
  return (
    <div className="ml-[2px] flex w-[15px] shrink-0 flex-col bg-[#f4f4f4]">
      {dockTabs.map((t) => (
        <button
          key={t.text}
          type="button"
          className={`flex shrink-0 flex-col items-center gap-[2px] rounded-l-sm border border-gray-400 bg-[#f4f4f4] pt-[2px] text-gray-600 ${t.className}`}
        >
          <Icon n={t.icon} className="size-[12px]" />
          <span className="text-[8px] leading-[10px] [text-orientation:sideways] [writing-mode:vertical-rl]">{t.text}</span>
        </button>
      ))}
    </div>
  );
}

/* ---------- reclassify dialog ---------- */

const remap = [
  ['0 - 3', '10'],
  ['3 - 6', '8'],
  ['6 - 11', '7'],
  ['11 - 20', '5'],
  ['20 - 30', '3'],
  ['30 - 61.560951', '1'],
  ['NoData', 'NoData'],
];

function DlgButton({ children, className, disabled }: { children: ReactNode; className: string; disabled?: boolean }) {
  return (
    <button
      type="button"
      disabled={disabled}
      className={`flex h-4 items-center justify-center whitespace-nowrap border border-[#b4b4b4] bg-[#e1e1e1] disabled:bg-[#cbcbcb] disabled:text-gray-500 ${className}`}
    >
      {children}
    </button>
  );
}

function Badge({ n, className }: { n: number; className: string }) {
  return (
    <span className={`absolute flex size-[14px] items-center justify-center rounded-full bg-[#3a5fd6] text-white ${className}`}>{n}</span>
  );
}

function FolderButton() {
  return (
    <button type="button" aria-label="browse" className="flex h-[18px] w-[17px] items-center justify-center border border-[#b4b4b4] bg-[#e1e1e1]">
      <Icon n="open" />
    </button>
  );
}

function ReclassifyDialog() {
  return (
    <section className="absolute left-[150px] top-[154px] w-[586px] border border-gray-400 bg-[#f0f0f0] shadow-md">
      <header className="flex h-[23px] items-center bg-white pl-[6px] text-gray-400">
        <Icon n="hammer" />
        <h2 className="ml-[2px] flex-1">重分类</h2>
        <svg viewBox="0 0 86 10" className="mr-3 h-[10px] w-[78px]" fill="none" stroke="#999" aria-hidden="true">
          <path d="M0 5.500h8M38.500 1.500h8v8h-8zM77.500 1.500l8 8M85.500 1.500l-8 8" />
        </svg>
      </header>
      <div className="mx-px flex border-l-2 border-t-2 border-gray-400 border-b border-b-white">
        <div className="flex-1 pb-[7px] pl-3 pt-2">
          <label htmlFor="in-raster" className="block h-[12px] leading-[12px]">输入栅格</label>
          <div className="flex items-start gap-[7px]">
            <div className="relative h-4 w-[521px] border-t-2 border-gray-400 bg-white">
              <input id="in-raster" defaultValue="Slope" className="block h-[14px] w-full pl-[2px] [font-family:'Liberation_Mono',monospace] text-[8px] outline-none" />
              <span className="pointer-events-none absolute right-0 top-0 flex h-[13px] w-3 items-center justify-center border border-gray-500 bg-gray-100">
                <Caret color="#000" className="h-1 w-[6px]" />
              </span>
            </div>
            <FolderButton />
          </div>
          <span className="block h-[12px] leading-[12px]">重分类字段</span>
          <Combo label="重分类字段" value="Value" className="h-4 w-[545px] bg-white" selectClass="[font-family:'Liberation_Mono',monospace] text-[8px] !pl-[2px]" />
          <span className="mt-px block h-[14px] leading-[12px]">重分类</span>
          <div className="flex h-[140px] w-[298px] gap-[7px] border border-[#dcdcdc]">
            <div className="w-[225px]">
              <div className="flex h-[103px] bg-white pt-[2px]">
                <table className="h-[97px] w-[210px] table-fixed border-collapse text-center [font-family:'Liberation_Sans',sans-serif] text-[8px] leading-[11px]">
                  <thead>
                    <tr className="h-3 border border-gray-700 bg-[#4d4d4d] text-white [font-family:'Liberation_Sans','Noto_Sans_CJK_SC',sans-serif] text-[9px]">
                      <th className="w-[7px] border-r border-black" />
                      <th className="border-r border-black">旧值</th>
                      <th>新值</th>
                    </tr>
                  </thead>
                  <tbody>
                    {remap.map(([from, to]) => (
                      <tr key={from} className="h-3">
                        <td className="border-b-2 border-r-2 border-gray-600 bg-gray-200" />
                        <td className="border-b border-r border-dashed border-gray-400">{from}</td>
                        <td className="border-b border-r border-dashed border-gray-400">{to}</td>
                      </tr>
                    ))}
                  </tbody>
                </table>
                <div className="ml-auto flex w-[11px] flex-col items-center bg-[#f0f0f0] pt-1">
                  <Chevron className="h-1 w-[6px] rotate-180" />
                  <span className="mt-1 h-3 w-full bg-[#cdcdcd]" />
                  <Chevron className="mb-px mt-auto h-1 w-[6px]" />
                </div>
              </div>
              <div className="mt-[13px] flex gap-2 pl-[6px]">
                <DlgButton className="w-10">加载. . .</DlgButton>
                <DlgButton className="w-10">保存. . .</DlgButton>
                <DlgButton className="ml-auto w-[82px]">对新值取反</DlgButton>
              </div>
            </div>
            <div className="flex flex-col pt-[9px]">
              <DlgButton className="w-[55px]">分类. . .</DlgButton>
              <DlgButton disabled className="mt-[5px] w-[55px]">唯一</DlgButton>
              <DlgButton className="mt-4 w-[55px]">添加条目</DlgButton>
              <DlgButton disabled className="mt-[7px] w-[55px]">删除条目</DlgButton>
              <DlgButton className="mt-[15px] w-[55px]">精度. . .</DlgButton>
            </div>
          </div>
          <label htmlFor="out-raster" className="mt-[2px] block h-[12px] leading-[12px]">输出栅格</label>
          <div className="flex items-start gap-[7px]">
            <input
              id="out-raster"
              defaultValue="C:\Users\HUAWEI\Desktop\【ArcGIS应用】\土壤稳定性评估\Re_Slope.tif"
              className="h-4 w-[521px] border border-gray-500 bg-white pl-px [font-family:'Liberation_Mono','Noto_Sans_CJK_SC',monospace] text-[8px] outline-none"
            />
            <FolderButton />
          </div>
        </div>
        <div className="flex w-[14px] flex-col items-center py-3">
          <Chevron className="h-[7px] w-[9px] rotate-180" />
          <span className="mt-[6px] h-[196px] w-3 bg-[#cdcdcd]" />
          <Chevron className="mb-px mt-auto h-[7px] w-[9px]" />
        </div>
      </div>
      <footer className="flex h-8 items-center justify-end gap-[5px] pr-[7px]">
        <DlgButton className="w-[55px]">确定</DlgButton>
        <DlgButton className="w-[55px]">取消</DlgButton>
        <DlgButton className="w-[66px]">环境...</DlgButton>
        <DlgButton className="w-[72px]">显示帮助 &gt;&gt;</DlgButton>
      </footer>

      {/* callouts */}
      <div className="pointer-events-none absolute left-[15px] top-[44px] h-[17px] w-[41px] border-2 border-[#3a5fd6]" />
      <div className="pointer-events-none absolute left-[11px] top-[106px] h-[107px] w-[230px] border-2 border-[#3a5fd6]" />
      <Badge n={2} className="left-0 top-[46px]" />
      <Badge n={3} className="-left-[4px] top-[149px]" />
      <Badge n={4} className="left-[1px] top-[262px]" />
    </section>
  );
}

/* ---------- floating bits ---------- */

function ImeBar() {
  return (
    <div className="absolute left-[664px] top-[64px] flex items-center">
      <svg viewBox="0 0 24 24" className="z-10 size-[22px] -rotate-6" aria-hidden="true">
        <rect x="1" y="1" width="22" height="22" rx="4" fill="#f4511e" />
        <path d="M18 6H9c-4 0-4 5 0 5.500l6 1c4 .7 3 5.500-1 5.500H5" fill="none" stroke="#fff" strokeWidth="3.200" />
      </svg>
      <div className="-ml-2 flex h-[19px] w-[66px] items-center justify-end gap-[7px] rounded-sm border border-[#b9d4ee] bg-white pr-[3px]">
        <span className="text-[11px] font-bold leading-none text-[#12b35c]">中</span>
        <svg viewBox="0 0 10 10" className="size-[11px]" aria-hidden="true">
          <path d="M7 0c4 4 1 10-4 9.500C1.500 9.300.5 8.500 0 7.500 4 8.500 7.500 5 7 0z" fill="#12b35c" />
        </svg>
        <svg viewBox="0 0 10 10" className="size-[11px]" fill="#12b35c" aria-hidden="true">
          <rect width="4.500" height="4.500" rx="1" />
          <circle cx="7.800" cy="2.200" r="1.600" fill="none" stroke="#12b35c" />
          <rect y="5.500" width="4.500" height="4.500" rx="1" />
          <rect x="5.500" y="5.500" width="4.500" height="4.500" rx="1" />
        </svg>
      </div>
    </div>
  );
}

function Watermark() {
  return (
    <div className="pointer-events-none absolute bottom-[31px] right-[35px] flex items-center gap-2">
      <svg viewBox="0 0 42 34" className="h-[34px] w-[42px] drop-shadow-sm" aria-hidden="true">
        <path d="M15 1C7 1 1 6 1 13c0 4 2 7 5 9l-1 5 5-3c2 .6 4 .8 6 .6C14 16 20 9 29 9.500 28 4 22 1 15 1z" fill="#fff" fillOpacity=".85" stroke="#aaa" strokeWidth=".6" />
        <path d="M28 11c-7 0-12 4.500-12 10s5 10 12 10c1.500 0 3-.2 4.500-.7l4 2.200-1-3.500c3-2 4.500-5 4.500-8 0-5.500-5-10-12-10z" fill="#fff" fillOpacity=".85" stroke="#aaa" strokeWidth=".6" />
        <g fill="#8a9a9a">
          <circle cx="10" cy="9" r="1.500" />
          <circle cx="20" cy="9" r="1.500" />
          <circle cx="24" cy="19" r="1.300" />
          <circle cx="32" cy="19" r="1.300" />
        </g>
      </svg>
      <span className="text-[27px] leading-none text-white/90 [text-shadow:1px_1px_1px_#888]">学研杂货铺</span>
    </div>
  );
}

export default function App() {
  return (
    <div className="relative flex h-screen flex-col overflow-hidden bg-[#f0f0f0] [font-family:'Noto_Sans','Noto_Sans_CJK_SC',sans-serif] text-[9px] leading-none text-gray-900">
      <header className="flex h-[18px] shrink-0 items-center bg-white pl-px">
        <Icon n="appLogo" className="size-[12px]" />
        <h1 className="ml-[2px] flex-1 text-[9px]">无标题.mxd - ArcMap</h1>
        <svg viewBox="0 0 80 10" className="mr-[13px] h-[10px] w-20" fill="none" stroke="#333" aria-hidden="true">
          <path d="M0 5.500h8M34.500 3.500h6v6h-6zM36.500 3.500v-2h6v6h-2M70.500 1.500l8 8M78.500 1.500l-8 8" />
        </svg>
      </header>

      <Toolbars />

      <div className="flex min-h-0 flex-1">
        <ContentsPanel />
        <MapView />
        <SearchPanel />
        <DockTabs />
      </div>

      <footer className="flex h-[17px] shrink-0 items-center border-t border-gray-200 pl-[851px]">
        <Icon n="globe" className="size-[13px]" />
        <span className="ml-1 whitespace-pre">117.594  28.971 十进制度</span>
      </footer>

      <ReclassifyDialog />
      <ImeBar />
      <div className="pointer-events-none absolute right-[33px] top-[328px] h-[53px] w-[205px] border-2 border-[#3a5fd6]" />
      <Badge n={1} className="right-[243px] top-[348px]" />
      <Watermark />
    </div>
  );
}
